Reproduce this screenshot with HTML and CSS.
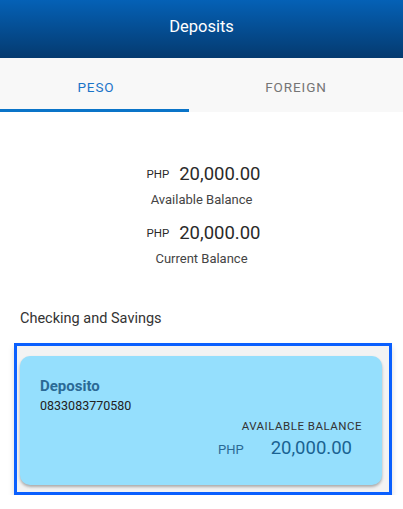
FILE: index.html
```html
<!DOCTYPE html>
<html lang="en">
<head>
    <meta charset="UTF-8">
    <meta name="viewport" content="width=device-width, initial-scale=1.0">
    <title>Deposits</title>
    <link rel="stylesheet" href="styles.css">
</head>
<body>
    <div class="header">Deposits</div>
    <div class="tabs">
        <button class="tab active">Peso</button>
        <button class="tab">Foreign</button>
    </div>
    <div class="summary">
        <div class="balance">
            <div class="amount"><span class="cur">PHP</span>20,000.00</div>
            <div class="label">Available Balance</div>
        </div>
        <div class="balance">
            <div class="amount"><span class="cur">PHP</span>20,000.00</div>
            <div class="label">Current Balance</div>
        </div>
    </div>
    <div class="section-title">Checking and Savings</div>
    <div class="selected">
        <div class="card">
            <div class="card-name">Deposito</div>
            <div class="card-number">0833083770580</div>
            <div class="card-label">AVAILABLE BALANCE</div>
            <div class="card-amount"><span class="card-cur">PHP</span>20,000.00</div>
        </div>
    </div>
</body>
</html>
```

FILE: styles.css
```css
body {
    font-family: Roboto, Arial, sans-serif;
    margin: 0;
    padding: 0;
    background-color: #fff;
    color: #333;
}
.header {
    height: 58px;
    line-height: 53px;
    text-align: center;
    color: white;
    font-size: 16.5px;
    background: linear-gradient(#0561b6, #053a6f);
}
.tabs {
    display: flex;
    background-color: #f8f8f8;
    height: 54px;
}
.tab {
    flex: 1;
    border: none;
    background: none;
    font-family: inherit;
    font-size: 13.5px;
    letter-spacing: 0.9px;
    text-transform: uppercase;
    color: #757575;
    padding: 6px 0 0;
    border-bottom: 3px solid transparent;
}
.tab.active {
    flex: none;
    width: 189px;
    padding-left: 3px;
    color: #1a74c8;
    border-bottom-color: #0a74c8;
}
.summary {
    padding-top: 50px;
    text-align: center;
}
.amount {
    font-size: 18.5px;
    color: #2a2a2a;
    line-height: 24px;
    padding-left: 4px;
}
.cur {
    font-size: 11.5px;
    margin-right: 10px;
    vertical-align: 2px;
}
.label {
    font-size: 13px;
    line-height: 16px;
    color: #444;
    margin-top: 6px;
    margin-bottom: 13px;
}
.section-title {
    font-size: 14.5px;
    line-height: 18px;
    color: #333;
    padding: 30px 20px 0;
}
.selected {
    margin: 15px 11px 0 14px;
    border: 3px solid #0a5ffe;
    padding: 10px 7px 7px 3px;
    background: #f3f3f3;
    box-shadow: 0 4px 6px rgba(0, 0, 0, 0.15);
}
.card {
    background-color: #95dffd;
    border-radius: 10px;
    padding: 21px 20px 23px;
    box-shadow: 0 2px 3px rgba(0, 0, 0, 0.3);
}
.card-name {
    font-size: 15px;
    line-height: 18px;
    font-weight: bold;
    color: #2b6a95;
}
.card-number {
    font-size: 12.5px;
    line-height: 16px;
    color: #222;
    margin-top: 3px;
}
.card-label {
    text-align: right;
    font-size: 11.5px;
    line-height: 14px;
    color: #333;
    letter-spacing: 0.5px;
    margin-top: 5px;
}
.card-amount {
    text-align: right;
    font-size: 18.5px;
    line-height: 24px;
    color: #1a6392;
    margin-top: 3px;
    padding-right: 10px;
}
.card-cur {
    font-size: 13px;
    color: #2b6a95;
    margin-right: 27px;
}
```
